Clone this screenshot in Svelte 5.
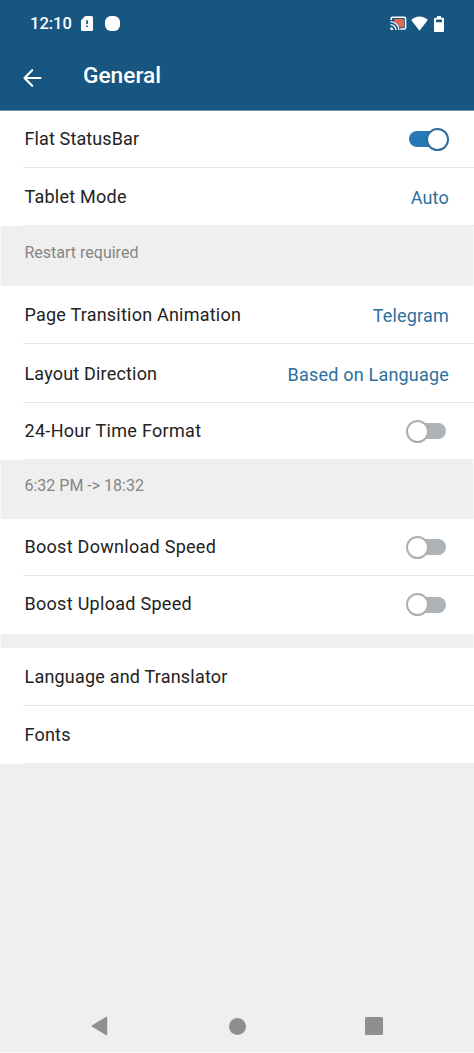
<script lang="ts">
    type Item = {
        label: string;
        height: number;
        spacing: number;
        value?: string;
        toggle?: boolean;
    };

    type Section = {
        items: Item[];
        hint?: string;
        gap: number;
        lastLine: boolean;
    };

    let sections: Section[] = $state([
        {
            items: [
                { label: "Flat StatusBar", height: 57, spacing: 0.12, toggle: true },
                { label: "Tablet Mode", height: 58, spacing: 0.24, value: "Auto" }
            ],
            hint: "Restart required",
            gap: 60,
            lastLine: true
        },
        {
            items: [
                { label: "Page Transition Animation", height: 58, spacing: 0.22, value: "Telegram" },
                { label: "Layout Direction", height: 59, spacing: 0.18, value: "Based on Language" },
                { label: "24-Hour Time Format", height: 57, spacing: 0.31, toggle: false }
            ],
            hint: "6:32 PM -> 18:32",
            gap: 59,
            lastLine: true
        },
        {
            items: [
                { label: "Boost Download Speed", height: 57, spacing: 0.28, toggle: false },
                { label: "Boost Upload Speed", height: 58, spacing: 0.29, toggle: false }
            ],
            gap: 14,
            lastLine: false
        },
        {
            items: [
                { label: "Language and Translator", height: 58, spacing: 0.2 },
                { label: "Fonts", height: 58, spacing: 0.2 }
            ],
            gap: 0,
            lastLine: true
        }
    ]);
</script>

<div class="screen">
    <header>
        <!-- status bar -->
        <div class="status-bar">
            <span class="clock">12:10</span>
            <svg class="sim" width="12" height="15" viewBox="0 0 12 15">
                <path d="M4.2 0H10.5Q12 0 12 1.5V13.5Q12 15 10.5 15H1.5Q0 15 0 13.5V4.2Z" fill="#fff" />
                <path d="M5.2 4.2H6.9V8H5.2ZM5.2 9.4H6.9V11H5.2Z" fill="#185682" />
            </svg>
            <div class="dot"></div>
            <svg class="cast" width="17" height="15" viewBox="0 0 17 15">
                <path d="M4.2 3H14V11.3H9.2Q8.2 7 4.2 5.5Z" fill="#e5674c" />
                <path d="M1.2 4V2.4Q1.2 1.2 2.4 1.2H14.4Q15.6 1.2 15.6 2.4V11.8Q15.6 13 14.4 13H10.2" fill="none" stroke="#fff" stroke-width="1.5" />
                <path d="M.5 5.6A8.4 8.4 0 0 1 8.9 14M.5 8.6A5.4 5.4 0 0 1 5.9 14" fill="none" stroke="#fff" stroke-width="1.4" />
                <path d="M.5 11.3A2.7 2.7 0 0 1 3.2 14H.5Z" fill="#fff" />
            </svg>
            <svg class="wifi" width="17" height="15" viewBox="0 0 17 15">
                <path d="M8.5 14.8L.2 4Q3.8.4 8.5.4T16.8 4Z" fill="#fff" />
            </svg>
            <svg width="10" height="16" viewBox="0 0 10 16">
                <path d="M3 0H7V1.8H9Q10 1.8 10 2.8V15Q10 16 9 16H1Q0 16 0 15V2.8Q0 1.8 1 1.8H3Z" fill="#fff" />
                <path d="M2 3.6H8V6.2H2Z" fill="#185682" />
            </svg>
        </div>

        <!-- title bar -->
        <div class="title-bar">
            <svg width="20" height="20" viewBox="0 0 20 20">
                <path d="M9.2 2.2L1.5 10L9.2 17.8M1.7 10H17.5" fill="none" stroke="#fff" stroke-width="2.1" stroke-linecap="round" stroke-linejoin="round" />
            </svg>
            <h1>General</h1>
        </div>
    </header>

    <main>
        {#each sections as section}
            <section class:last-line={section.lastLine}>
                {#each section.items as item}
                    <div class="row" style="height: {item.height}px;">
                        <span class="label" class:raised={item.toggle !== undefined} style="letter-spacing: {item.spacing}px;">{item.label}</span>
                        {#if item.value}
                            <span class="value">{item.value}</span>
                        {:else if item.toggle !== undefined}
                            <button
                                class="toggle"
                                class:on={item.toggle}
                                aria-label={item.label}
                                onclick={() => (item.toggle = !item.toggle)}
                            >
                                <span class="thumb"></span>
                            </button>
                        {/if}
                    </div>
                {/each}
            </section>
            {#if section.gap}
                <div class="hint" style="height: {section.gap}px;">{section.hint ?? ""}</div>
            {/if}
        {/each}
    </main>

    <nav>
        <svg width="17" height="20" viewBox="0 0 17 20">
            <path d="M15.5 1.3V18.7L1.2 10Z" fill="#8f8f8f" stroke="#8f8f8f" stroke-width="1.4" stroke-linejoin="round" />
        </svg>
        <div class="home"></div>
        <div class="recent"></div>
    </nav>
</div>

<style>
    :global(body) {
        background-color: #efefef;
    }

    .screen {
        width: 474px;
        height: 1053px;
        overflow: hidden;
        display: flex;
        flex-direction: column;
        background-color: #efefef;
        color: #222;
        font-family: Roboto, sans-serif;
        font-size: 18px;
    }

    header {
        height: 111px;
        flex: none;
        background-color: #185682;
        border-bottom: 1px solid #7096b2;
        box-sizing: border-box;
        color: #fff;
    }

    .status-bar {
        height: 47px;
        padding: 0 30px;
        display: flex;
        align-items: center;
    }

    .clock {
        width: 51px;
        font-size: 16.5px;
        font-weight: 500;
    }

    .dot {
        width: 15px;
        height: 15px;
        margin-left: 12px;
        border-radius: 6px;
        background-color: #fff;
    }

    .cast {
        margin-left: auto;
        margin-right: 4px;
    }

    .wifi {
        margin-right: 6px;
    }

    .title-bar {
        height: 62px;
        padding-left: 23px;
        display: flex;
        align-items: center;
    }

    h1 {
        margin: -5px 0 0 40px;
        font-size: 22.7px;
        font-weight: 500;
    }

    main {
        flex: 1;
    }

    section {
        background-color: #fff;
    }

    .row {
        position: relative;
        box-sizing: border-box;
        padding: 0 25px 1px 24.5px;
        display: flex;
        align-items: center;
        justify-content: space-between;
        white-space: nowrap;
    }

    /* divider starts under the label */
    .row::after {
        content: "";
        position: absolute;
        left: 23px;
        right: 0;
        bottom: 0;
        height: 1px;
        background-color: #e8e8e8;
    }

    .last-line .row:last-child::after {
        background-color: #efefef;
    }

    section:not(.last-line) .row:last-child::after {
        display: none;
    }

    .raised {
        padding-bottom: 2px;
    }

    .value {
        color: #2b719f;
        padding-top: 2px;
        letter-spacing: 0.2px;
    }

    .toggle {
        width: 40px;
        height: 16px;
        margin: 0 3.5px 0 0;
        padding: 0;
        border: none;
        border-radius: 8px;
        background: linear-gradient(to right, transparent 8px, #aeb3b7 8px);
        display: flex;
        align-items: center;
    }

    .thumb {
        width: 23px;
        height: 23px;
        flex: none;
        box-sizing: border-box;
        border: 2px solid #abb0b3;
        border-radius: 50%;
        background-color: #fff;
    }

    .toggle.on {
        margin-right: 0;
        justify-content: flex-end;
        background: linear-gradient(to left, transparent 8px, #2678b6 8px);
    }

    .toggle.on .thumb {
        border-color: #2b6da0;
    }

    .hint {
        box-sizing: border-box;
        padding: 0 23.5px 8px;
        display: flex;
        align-items: center;
        border: solid #f7f7f7;
        border-width: 0 1px;
        color: #858585;
        font-size: 16px;
    }

    nav {
        height: 54px;
        padding: 1px 91px 0;
        display: flex;
        align-items: center;
        justify-content: space-between;
        box-sizing: border-box;
        border-bottom: 1px solid #f8f8f8;
    }

    .home {
        width: 17px;
        height: 17px;
        margin-left: 1px;
        border-radius: 50%;
        background-color: #8f8f8f;
    }

    .recent {
        width: 18px;
        height: 18px;
        border-radius: 1.5px;
        background-color: #8f8f8f;
    }
</style>
